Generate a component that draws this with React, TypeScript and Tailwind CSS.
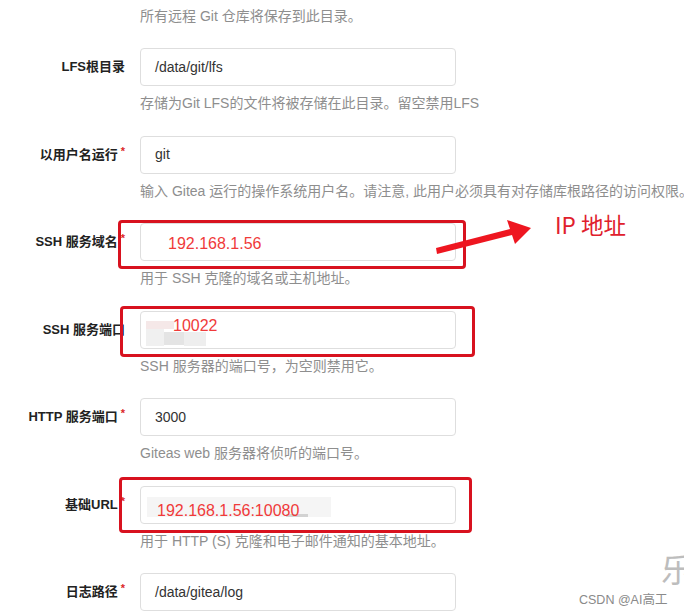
import React from "react";

type Row = {
  label?: string;
  req?: boolean;
  value?: string;
  help?: string;
  kind?: "plain" | "host" | "port" | "url";
};

const rows: Row[] = [
  { help: "所有远程 Git 仓库将保存到此目录。" },
  { label: "LFS根目录", value: "/data/git/lfs", help: "存储为Git LFS的文件将被存储在此目录。留空禁用LFS" },
  { label: "以用户名运行", req: true, value: "git", help: "输入 Gitea 运行的操作系统用户名。请注意, 此用户必须具有对存储库根路径的访问权限。" },
  { label: "SSH 服务域名", req: true, kind: "host", help: "用于 SSH 克隆的域名或主机地址。" },
  { label: "SSH 服务端口", kind: "port", help: "SSH 服务器的端口号，为空则禁用它。" },
  { label: "HTTP 服务端口", req: true, value: "3000", help: "Giteas web 服务器将侦听的端口号。" },
  { label: "基础URL", req: true, kind: "url", help: "用于 HTTP (S) 克隆和电子邮件通知的基本地址。" },
  { label: "日志路径", req: true, value: "/data/gitea/log" },
];

const font = { fontFamily: '"Liberation Sans", "Noto Sans CJK SC", sans-serif' };

function InputBox({ row }: { row: Row }) {
  if (row.kind === "host") {
    return (
      <div className="relative w-[316px] h-[38px] border border-[#dedede] rounded-[4px] bg-white flex items-center pl-[27px] pt-[4px]">
        <span className="text-[16px] text-[#f03a3a] leading-none">192.168.1.56</span>
      </div>
    );
  }
  if (row.kind === "port") {
    return (
      <div className="relative w-[316px] h-[38px] border border-[#dedede] rounded-[4px] bg-white flex items-center pl-[32px] pb-[7px] overflow-hidden">
        <div className="absolute left-[5px] top-[9px] w-[28px] h-[8px] bg-[#f5e8e8]" />
        <div className="absolute left-[5px] top-[17px] w-[18px] h-[17px] bg-[#f0f0f0]" />
        <div className="absolute left-[23px] top-[20px] w-[20px] h-[13px] bg-[#e4e4e4]" />
        <div className="absolute left-[43px] top-[20px] w-[22px] h-[14px] bg-[#eeeeee]" />
        <span className="relative text-[16px] text-[#f03a3a] leading-none">10022</span>
      </div>
    );
  }
  if (row.kind === "url") {
    return (
      <div className="relative w-[316px] h-[38px] border border-[#dedede] rounded-[4px] bg-white flex items-center pl-[16px] pt-[13px] overflow-hidden">
        <div className="absolute left-[6px] top-[10px] w-[184px] h-[20px] bg-[#f5f5f5]" />
        <div className="absolute left-[145px] top-[27px] w-[22px] h-[3px] bg-[#d2d2d2]" />
        <span className="relative text-[16px] text-[#f03a3a] leading-none">192.168.1.56:10080</span>
      </div>
    );
  }
  return (
    <div className="w-[316px] h-[38px] border border-[#dedede] rounded-[4px] bg-white flex items-center pl-[14px]">
      <span className="text-[14px] text-[#333333]">{row.value}</span>
    </div>
  );
}

export default function App() {
  return (
    <div className="relative w-[684px] h-[611px] overflow-hidden bg-white" style={font}>
      <div className="flex flex-col -mt-[39.5px]">
        {rows.map((row, i) => (
          <div key={i} className="flex flex-col h-[87.5px]">
            <div className="flex items-center h-[38px]">
              <div className="w-[125px] text-right text-[13px] font-semibold text-[#222222] whitespace-nowrap">
                {row.label}
                {row.req && (
                  <span className="relative -top-[4px] ml-[3px] text-[11px] text-[#db2828] font-bold">*</span>
                )}
              </div>
              <div className="ml-[15px]">
                <InputBox row={row} />
              </div>
            </div>
            {row.help && (
              <div className="mt-[7px] pl-[140px] h-[20px] leading-[20px] text-[14px] text-[#8e8e8e] whitespace-nowrap">
                {row.help}
              </div>
            )}
          </div>
        ))}
      </div>

      {/* red annotation boxes */}
      <div className="absolute left-[118px] top-[220px] w-[348px] h-[49px] border-[3px] border-[#d8121f] rounded-[4px]" />
      <div className="absolute left-[120px] top-[306px] w-[355px] h-[51px] border-[3px] border-[#d8121f] rounded-[4px]" />
      <div className="absolute left-[119px] top-[477px] w-[353px] h-[56px] border-[3px] border-[#d8121f] rounded-[4px]" />

      {/* arrow */}
      <svg className="absolute left-0 top-0" width="684" height="611" viewBox="0 0 684 611">
        <polygon points="436,248 510,229 507,220 531,228 515,244 512,235 437,254" fill="#ee1620" />
      </svg>

      <div
        className="absolute left-[555px] top-[209px] text-[22.5px] leading-[30px] text-[#e0202c] whitespace-nowrap"
        style={{ fontFamily: '"Noto Sans CJK SC", "Liberation Sans", sans-serif' }}
      >
        IP 地址
      </div>

      {/* watermark */}
      <div
        className="absolute left-[661px] top-[548px] text-[33px] leading-[40px] text-[#bdbdbd]"
        style={{ fontFamily: '"Noto Sans CJK SC", sans-serif' }}
      >
        乐
      </div>
      <div className="absolute left-[579px] top-[592px] text-[12.5px] leading-[16px] text-[#8a8a8a] whitespace-nowrap">
        CSDN @AI高工
      </div>
    </div>
  );
}
